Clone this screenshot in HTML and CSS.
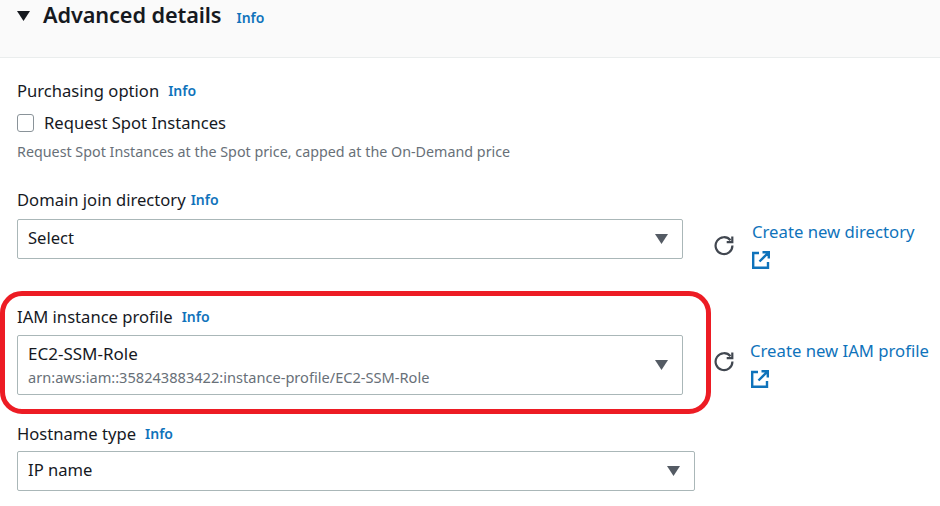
FILE: index.html
```html
<!DOCTYPE html>
<html lang="en">
<head>
<meta charset="utf-8">
<title>Advanced details</title>
<link rel="stylesheet" href="styles.css">
</head>
<body>
<header class="head">
  <svg class="caret" width="13" height="10" viewBox="0 0 13 10"><path d="M0 0h13L6.500 10z"/></svg>
  <h2 class="title">Advanced details</h2>
  <a class="info info-head">Info</a>
</header>
<main class="content">
  <section class="purchase">
    <div class="label"><span>Purchasing option</span><a class="info">Info</a></div>
    <div class="check-row"><span class="checkbox"></span><span class="check-text">Request Spot Instances</span></div>
    <div class="hint">Request Spot Instances at the Spot price, capped at the On-Demand price</div>
  </section>
  <section class="domain">
    <div class="label label-tight"><span>Domain join directory</span><a class="info">Info</a></div>
    <div class="row">
      <div class="select select-short"><div class="value">Select</div>
        <svg class="arrow" width="13" height="10" viewBox="0 0 13 10"><path d="M0 0h13L6.500 10z"/></svg></div>
      <svg class="refresh" width="22" height="22" viewBox="0 0 22 22"><path d="M17.500 6.300A8.400 8.400 0 1 0 19.400 11.500" fill="none" stroke="#414750" stroke-width="2.200"/><path d="M19.300 2.500v5.600h-5.600" fill="none" stroke="#414750" stroke-width="2.200"/></svg>
      <div class="create"><a class="link">Create new directory</a>
        <svg class="ext" width="18" height="18" viewBox="0 0 18 18"><path d="M7 2H1.200v14.800H16V11M10.500 1.200h6.300v6.300M16.500 1.500 7.500 10.500" fill="none" stroke="#0f73bb" stroke-width="2.400"/></svg></div>
    </div>
  </section>
  <section class="iam">
    <div class="label"><span>IAM instance profile</span><a class="info">Info</a></div>
    <div class="row">
      <div class="select select-short select-tall"><div><div class="value value-role">EC2-SSM-Role</div><div class="sub">arn:aws:iam::358243883422:instance-profile/EC2-SSM-Role</div></div>
        <svg class="arrow" width="13" height="10" viewBox="0 0 13 10"><path d="M0 0h13L6.500 10z"/></svg></div>
      <svg class="refresh" width="22" height="22" viewBox="0 0 22 22"><path d="M17.500 6.300A8.400 8.400 0 1 0 19.400 11.500" fill="none" stroke="#414750" stroke-width="2.200"/><path d="M19.300 2.500v5.600h-5.600" fill="none" stroke="#414750" stroke-width="2.200"/></svg>
      <div class="create create-iam"><a class="link">Create new IAM profile</a>
        <svg class="ext" width="18" height="18" viewBox="0 0 18 18"><path d="M7 2H1.200v14.800H16V11M10.500 1.200h6.300v6.300M16.500 1.500 7.500 10.500" fill="none" stroke="#0f73bb" stroke-width="2.400"/></svg></div>
    </div>
  </section>
  <section class="host">
    <div class="label"><span>Hostname type</span><a class="info">Info</a></div>
    <div class="select select-wide"><div class="value">IP name</div>
      <svg class="arrow" width="13" height="10" viewBox="0 0 13 10"><path d="M0 0h13L6.500 10z"/></svg></div>
  </section>
</main>
<div class="highlight"></div>
</body>
</html>
```
FILE: styles.css
```css
* { box-sizing: border-box; }
html, body { margin: 0; padding: 0; }
body {
  width: 940px;
  height: 506px;
  overflow: hidden;
  position: relative;
  background: #fff;
  color: #16191f;
  font-family: "Noto Sans", "Open Sans", sans-serif;
  font-size: 16.600px;
}
.head {
  height: 58px;
  background: #fafafa;
  border-bottom: 1px solid #eaeded;
  display: flex;
  align-items: flex-start;
  padding: 0 0 0 17px;
}
.caret { margin-top: 11px; fill: #16191f; flex: none; }
.title {
  margin: 1px 0 0 13px;
  font-size: 21.700px;
  line-height: 28px;
  font-weight: 600;
  letter-spacing: -0.100px;
}
.info {
  color: #0f73bb;
  font-size: 14px;
  font-weight: 600;
  line-height: 18px;
}
.info-head { margin: 9px 0 0 15px; }
.content { padding: 0 0 0 17px; }
.label {
  display: flex;
  align-items: center;
  gap: 9px;
  height: 22px;
  font-size: 16.600px;
  color: #16191f;
}
.label-tight { gap: 5px; }
.label .info { margin-top: 1px; }
.purchase { padding-top: 21px; }
.check-row {
  display: flex;
  align-items: center;
  gap: 10px;
  height: 24px;
  margin-top: 10px;
}
.checkbox {
  width: 17px;
  height: 18px;
  border: 1.500px solid #8a9399;
  border-radius: 3px;
  background: #fff;
}
.check-text { font-size: 16.600px; margin-top: -2px; }
.hint {
  margin-top: 7px;
  font-size: 14.300px;
  line-height: 20px;
  color: #687078;
}
.domain { margin-top: 26px; }
.row { display: flex; align-items: flex-start; }
.domain .row { margin-top: 9px; }
.iam .row { margin-top: 8px; }
.select {
  display: flex;
  align-items: center;
  justify-content: space-between;
  height: 40px;
  border: 1px solid #aab7b8;
  border-radius: 2px;
  background: #fff;
  padding: 0 14px 0 10px;
}
.select-short { width: 666px; }
.select-wide { width: 678px; margin-top: 7px; }
.select-tall { height: 60px; }
.value { font-size: 16.600px; line-height: 22px; margin-top: -2px; }
.value-role { font-size: 17px; margin-top: 0; }
.sub { font-size: 14.600px; line-height: 20px; color: #687078; margin-top: 2px; }
.arrow { fill: #545b64; flex: none; }
.refresh { flex: none; margin: 15px 0 0 30px; }
.create { margin: 2px 0 0 17px; }
.create-iam { margin: 5px 0 0 15px; }
.link {
  display: block;
  color: #0f73bb;
  font-size: 16.700px;
  line-height: 22px;
}
.ext { display: block; margin-top: 8px; }
.create-iam .ext { margin-left: 1px; }
.iam { margin-top: 36px; }
.host { margin-top: 27px; }
.highlight {
  position: absolute;
  left: 0;
  top: 291px;
  width: 711px;
  height: 123px;
  border: 5px solid #ed1c24;
  border-radius: 22px;
  pointer-events: none;
}
```
